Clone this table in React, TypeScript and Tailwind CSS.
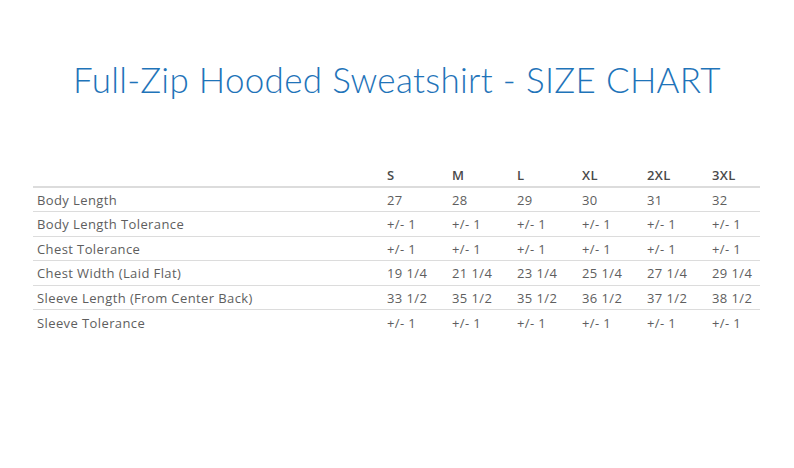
const sizes = ['S', 'M', 'L', 'XL', '2XL', '3XL'];

const rows: { label: string; values: string[] }[] = [
  { label: 'Body Length', values: ['27', '28', '29', '30', '31', '32'] },
  { label: 'Body Length Tolerance', values: ['+/- 1', '+/- 1', '+/- 1', '+/- 1', '+/- 1', '+/- 1'] },
  { label: 'Chest Tolerance', values: ['+/- 1', '+/- 1', '+/- 1', '+/- 1', '+/- 1', '+/- 1'] },
  { label: 'Chest Width (Laid Flat)', values: ['19 1/4', '21 1/4', '23 1/4', '25 1/4', '27 1/4', '29 1/4'] },
  { label: 'Sleeve Length (From Center Back)', values: ['33 1/2', '35 1/2', '35 1/2', '36 1/2', '37 1/2', '38 1/2'] },
  { label: 'Sleeve Tolerance', values: ['+/- 1', '+/- 1', '+/- 1', '+/- 1', '+/- 1', '+/- 1'] },
];

export default function App() {
  return (
    <div className="w-[794px] h-[468px] bg-white overflow-hidden">
      <h1
        className="pt-[57px] text-center text-[35px] leading-[44px] font-light text-[#1f74b9] tracking-[0.3px]"
        style={{ fontFamily: 'Lato, sans-serif' }}
      >
        Full-Zip Hooded Sweatshirt - SIZE CHART
      </h1>

      <table
        className="mt-[64px] ml-[33px] w-[727px] table-fixed border-collapse text-[13px] tracking-[0.4px] text-[#5e5e5e]"
        style={{ fontFamily: '"Open Sans", sans-serif' }}
      >
        <colgroup>
          <col className="w-[350px]" />
          <col className="w-[65px]" />
          <col className="w-[65px]" />
          <col className="w-[65px]" />
          <col className="w-[65px]" />
          <col className="w-[65px]" />
          <col />
        </colgroup>
        <thead>
          <tr className="border-b-2 border-[#dcdcdc]">
            <th className="h-[22px]" />
            {sizes.map((s) => (
              <th key={s} className="pl-[4px] pb-[1px] text-left font-semibold text-[#4a4a4a] h-[22px] align-bottom">
                {s}
              </th>
            ))}
          </tr>
        </thead>
        <tbody>
          {rows.map((row, i) => (
            <tr key={row.label} className={i < rows.length - 1 ? 'border-b border-[#dcdcdc]' : ''}>
              <td className="pl-[4px] pt-[2px] h-[24.6px] align-middle">{row.label}</td>
              {row.values.map((v, j) => (
                <td key={j} className="pl-[4px] pt-[2px] h-[24.6px] align-middle">
                  {v}
                </td>
              ))}
            </tr>
          ))}
        </tbody>
      </table>
    </div>
  );
}
